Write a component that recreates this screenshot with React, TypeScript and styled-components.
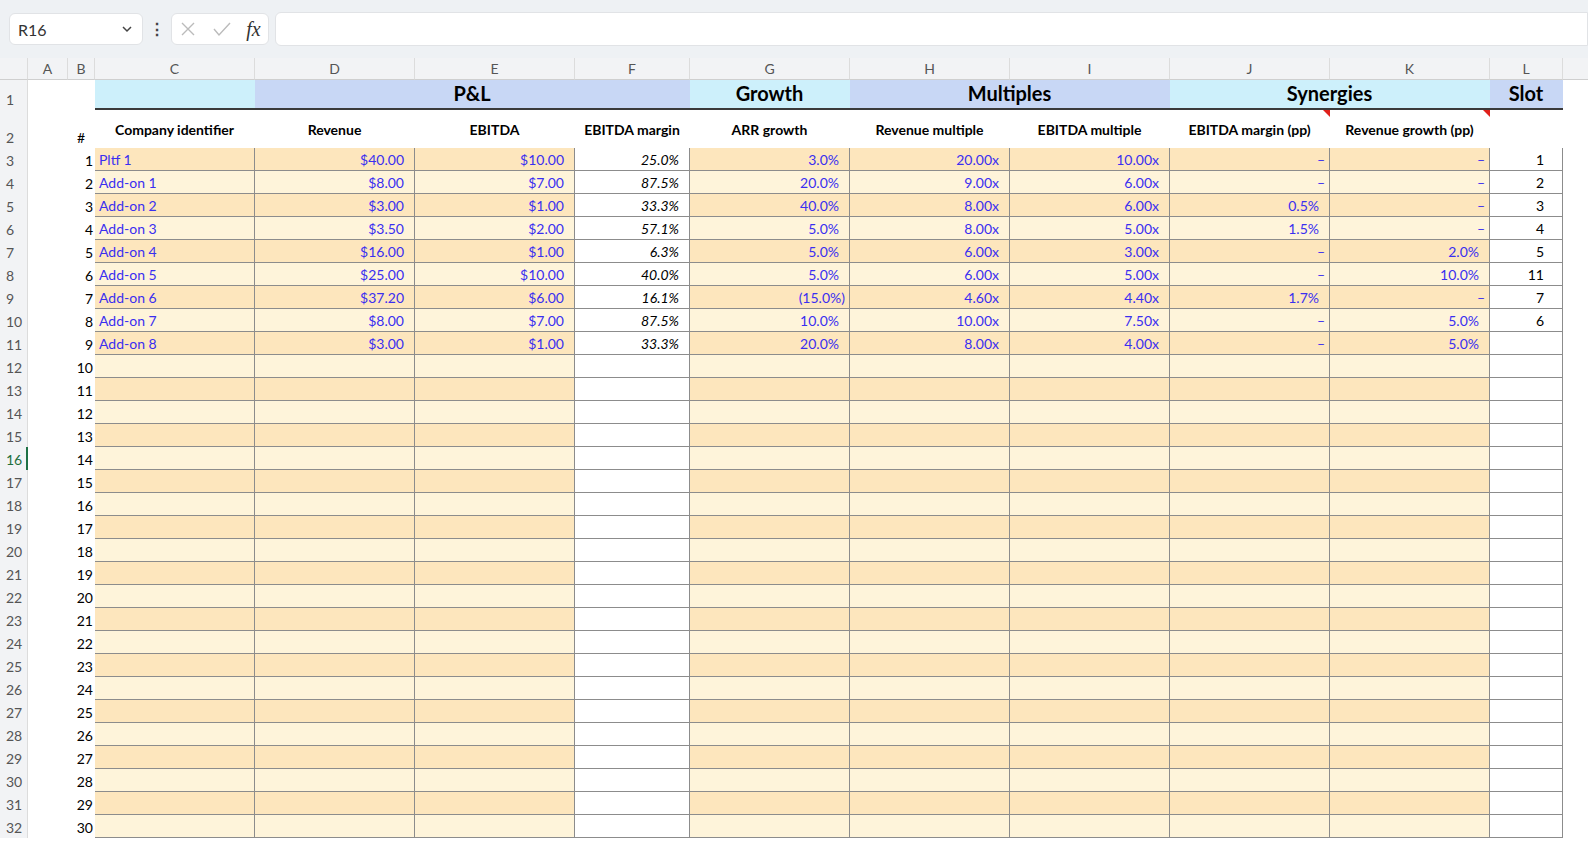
import React from "react";
import styled, { createGlobalStyle, css } from "styled-components";

const Global = createGlobalStyle`
  body { margin: 0; background: #fff; font-family: Lato, "Open Sans", sans-serif; }
`;

const COLS = [28, 40, 27, 160, 160, 160, 115, 160, 160, 160, 160, 160, 73, 26];
const LETTERS = ["", "A", "B", "C", "D", "E", "F", "G", "H", "I", "J", "K", "L", ""];
const template = COLS.map((c) => c + "px").join(" ");

const Page = styled.div`
  width: 1588px;
  height: 852px;
  overflow: hidden;
  background: #fff;
`;

const FormulaBar = styled.div`
  height: 58px;
  background: #eef1f4;
  display: flex;
  align-items: center;
  gap: 6px;
  padding: 0 0 0 9px;
`;

const NameBox = styled.div`
  width: 134px;
  height: 32px;
  background: #fff;
  border-radius: 6px;
  border: 1px solid #e1e3e6;
  display: flex;
  align-items: center;
  justify-content: space-between;
  padding: 0 8px;
  box-sizing: border-box;
  font-size: 16px;
  color: #333;
`;

const Dots = styled.div`
  width: 16px;
  text-align: center;
  font-size: 16px;
  font-weight: bold;
  color: #444;
`;

const FxBox = styled.div`
  width: 98px;
  height: 32px;
  background: #fff;
  border-radius: 6px;
  border: 1px solid #e1e3e6;
  display: flex;
  align-items: center;
  justify-content: space-around;
  box-sizing: border-box;
  color: #bbb;
`;

const Fx = styled.span`
  font-family: "Liberation Serif", serif;
  font-style: italic;
  font-size: 20px;
  color: #333;
`;

const FormulaInput = styled.div`
  flex: 1;
  height: 32px;
  background: #fff;
  border-radius: 6px 0 0 6px;
  border: 1px solid #e1e3e6;
`;

const Grid = styled.div`
  display: grid;
  grid-template-columns: ${template};
  grid-template-rows: 22px 30px 38px repeat(30, 23px);
  font-size: 14px;
`;

const ColHead = styled.div<{ $sel?: boolean }>`
  background: #f2f3f5;
  border-right: 1px solid #dcdcdc;
  border-bottom: 1px solid #cfcfcf;
  color: #555;
  font-size: 14px;
  display: flex;
  align-items: center;
  justify-content: center;
`;

const RowHead = styled.div<{ $sel?: boolean }>`
  background: #f2f3f5;
  color: ${(p) => (p.$sel ? "#1e6e3c" : "#555")};
  border-right: ${(p) => (p.$sel ? "2px solid #1e7145" : "1px solid #dcdcdc")};
  display: flex;
  align-items: flex-end;
  padding: 0 0 2px 6px;
  font-size: 14px;
`;

type Kind = "blank" | "num" | "band" | "head" | "data";

const Cell = styled.div<{
  $bg?: string;
  $align?: string;
  $color?: string;
  $italic?: boolean;
  $bold?: boolean;
  $size?: number;
  $grid?: boolean;
  $thick?: boolean;
  $span?: number;
  $flag?: boolean;
}>`
  position: relative;
  background: ${(p) => p.$bg || "#fff"};
  color: ${(p) => p.$color || "#000"};
  font-style: ${(p) => (p.$italic ? "italic" : "normal")};
  font-weight: ${(p) => (p.$bold ? 700 : 400)};
  font-size: ${(p) => p.$size || 14}px;
  display: flex;
  align-items: flex-end;
  justify-content: ${(p) => p.$align || "flex-start"};
  padding: 0 5px 2px 4px;
  white-space: nowrap;
  overflow: hidden;
  box-sizing: border-box;
  ${(p) => p.$span && css`grid-column: span ${p.$span};`}
  ${(p) =>
    p.$grid &&
    css`
      border-right: 1px solid #8c8c8c;
      border-bottom: 1px solid #8c8c8c;
    `}
  ${(p) => p.$thick && css`border-bottom: 2px solid #3a3a3a;`}
  ${(p) =>
    p.$flag &&
    css`
      &::after {
        content: "";
        position: absolute;
        top: 0;
        right: 0;
        border-top: 7px solid #e0201b;
        border-left: 7px solid transparent;
      }
    `}
`;

const BLUE = "#3a2ff0";
const DARK = "#fde6bd";
const LIGHT = "#fef4da";
const CYAN = "#cdf0fb";
const PERI = "#c8d7f5";

const data: string[][] = [
  ["Pltf 1", "$40.00", "$10.00", "25.0%", "3.0%", "20.00x", "10.00x", "–", "–", "1"],
  ["Add-on 1", "$8.00", "$7.00", "87.5%", "20.0%", "9.00x", "6.00x", "–", "–", "2"],
  ["Add-on 2", "$3.00", "$1.00", "33.3%", "40.0%", "8.00x", "6.00x", "0.5%", "–", "3"],
  ["Add-on 3", "$3.50", "$2.00", "57.1%", "5.0%", "8.00x", "5.00x", "1.5%", "–", "4"],
  ["Add-on 4", "$16.00", "$1.00", "6.3%", "5.0%", "6.00x", "3.00x", "–", "2.0%", "5"],
  ["Add-on 5", "$25.00", "$10.00", "40.0%", "5.0%", "6.00x", "5.00x", "–", "10.0%", "11"],
  ["Add-on 6", "$37.20", "$6.00", "16.1%", "(15.0%)", "4.60x", "4.40x", "1.7%", "–", "7"],
  ["Add-on 7", "$8.00", "$7.00", "87.5%", "10.0%", "10.00x", "7.50x", "–", "5.0%", "6"],
  ["Add-on 8", "$3.00", "$1.00", "33.3%", "20.0%", "8.00x", "4.00x", "–", "5.0%", ""],
];

const heads = [
  "Company identifier",
  "Revenue",
  "EBITDA",
  "EBITDA margin",
  "ARR growth",
  "Revenue multiple",
  "EBITDA multiple",
  "EBITDA margin (pp)",
  "Revenue growth (pp)",
  "",
];

export default function App() {
  const rows: React.ReactNode[] = [];

  // column header
  LETTERS.forEach((l, i) => rows.push(<ColHead key={"h" + i}>{l}</ColHead>));

  // row 1
  rows.push(<RowHead key="r1">1</RowHead>);
  rows.push(<Cell key="1a" />, <Cell key="1b" />);
  rows.push(<Cell key="1c" $bg={CYAN} $thick />);
  const band = (k: string, t: string, bg: string, span: number) => (
    <Cell key={k} $bg={bg} $span={span} $thick $bold $size={20} $align="center" style={{ alignItems: "center" }}>
      {t}
    </Cell>
  );
  rows.push(band("pl", "P&L", PERI, 3), band("gr", "Growth", CYAN, 1), band("mu", "Multiples", PERI, 2), band("sy", "Synergies", CYAN, 2), band("sl", "Slot", PERI, 1));
  rows.push(<Cell key="1z" />);

  // row 2
  rows.push(<RowHead key="r2">2</RowHead>);
  rows.push(<Cell key="2a" />, <Cell key="2b" $align="center">#</Cell>);
  heads.forEach((h, i) =>
    rows.push(
      <Cell key={"2" + i} $bold $align="center" $flag={i === 7 || i === 8} style={{ paddingBottom: 10 }}>
        {h}
      </Cell>
    )
  );
  rows.push(<Cell key="2z" />);

  for (let r = 0; r < 30; r++) {
    const n = r + 3;
    const bg = r % 2 === 0 ? DARK : LIGHT;
    const d = data[r];
    rows.push(<RowHead key={"r" + n} $sel={n === 16}>{n}</RowHead>);
    rows.push(<Cell key={n + "a"} />);
    rows.push(<Cell key={n + "b"} $align="flex-end" style={{ paddingRight: 2 }}>{r + 1}</Cell>);
    for (let c = 0; c < 10; c++) {
      const white = c === 3 || c === 9;
      const val = d ? d[c] : "";
      rows.push(
        <Cell
          key={n + "-" + c}
          $grid
          $bg={white ? "#fff" : bg}
          $color={white ? "#000" : BLUE}
          $italic={c === 3}
          $align={c === 0 ? "flex-start" : "flex-end"}
          style={c === 9 ? { paddingRight: 18 } : c > 0 && c < 9 ? { paddingRight: val === "–" || val.startsWith("(") ? 4 : 10 } : undefined}
        >
          {val}
        </Cell>
      );
    }
    rows.push(<Cell key={n + "z"} />);
  }

  return (
    <Page>
      <Global />
      <FormulaBar>
        <NameBox>
          <span>R16</span>
          <svg width="14" height="14" viewBox="0 0 14 14" fill="none" stroke="#444" strokeWidth="1.5">
            <path d="M3 5l4 4 4-4" />
          </svg>
        </NameBox>
        <Dots>⋮</Dots>
        <FxBox>
          <svg width="18" height="18" viewBox="0 0 18 18" stroke="#bbb" strokeWidth="1.4">
            <path d="M3 3l12 12M15 3L3 15" />
          </svg>
          <svg width="20" height="18" viewBox="0 0 20 18" fill="none" stroke="#bbb" strokeWidth="1.4">
            <path d="M2 9l5 6L18 3" />
          </svg>
          <Fx>fx</Fx>
        </FxBox>
        <FormulaInput />
      </FormulaBar>
      <Grid>{rows}</Grid>
    </Page>
  );
}
